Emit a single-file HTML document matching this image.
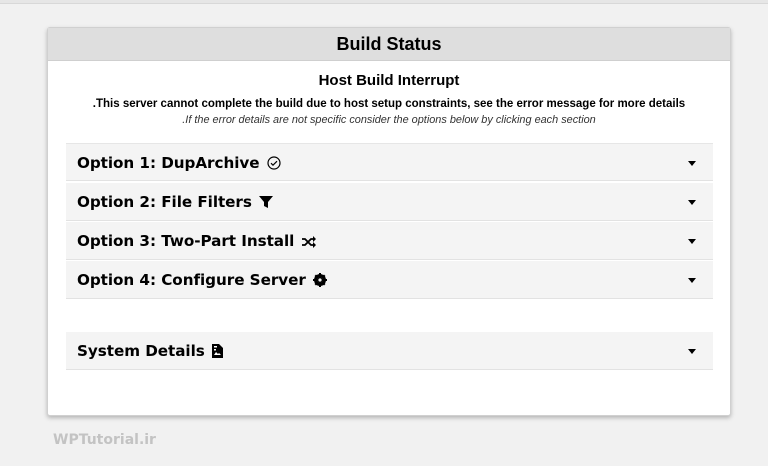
<!DOCTYPE html>
<html><head><style>
body{margin:0;width:768px;height:466px;background:#f1f1f1;position:relative;overflow:hidden;font-family:"Liberation Sans",sans-serif;}
.top{position:absolute;left:0;right:0;top:0;height:3px;background:#e6e6e6;border-bottom:1px solid #d8d8d8}
.panel{position:absolute;left:47px;top:27px;width:682px;height:387px;background:#fff;border:1px solid #d0d0d0;border-radius:3px;box-shadow:0 2px 4px rgba(0,0,0,.25)}
.hd{height:32px;background:#dedede;border-bottom:1px solid #cfcfcf;text-align:center;font-weight:bold;font-size:18px;line-height:33px;color:#000}
.t1{position:absolute;top:44px;left:0;right:0;text-align:center;font-weight:bold;font-size:15px}
.t2{position:absolute;top:70px;left:0;right:0;text-align:center;font-weight:bold;font-size:11.5px}
.t3{position:absolute;top:86px;left:0;right:0;text-align:center;font-style:italic;font-size:10.9px;color:#333}
.row{position:absolute;left:18px;width:647px;height:38px;background:#f4f4f4;border-bottom:1px solid #e2e2e2;font-family:"DejaVu Sans",sans-serif;font-weight:bold;font-size:15.2px;letter-spacing:-0.05px;line-height:38px;color:#000;box-sizing:border-box;padding-left:11px}
.row:after{content:"";position:absolute;right:17px;top:17px;border-left:4px solid transparent;border-right:4px solid transparent;border-top:5px solid #000}
.row svg{vertical-align:-2px;margin-left:2px}
.wm{position:absolute;left:53px;top:432px;font-family:"DejaVu Sans",sans-serif;font-weight:bold;font-size:14px;color:#c3c3c3}
</style></head><body>
<div class="top"></div>
<div class="panel">
<div class="hd">Build Status</div>
<div class="t1">Host Build Interrupt</div>
<div class="t2">.This server cannot complete the build due to host setup constraints, see the error message for more details</div>
<div class="t3">.If the error details are not specific consider the options below by clicking each section</div>
<div class="row" style="top:115px;border-top:1px solid #e6e6e6">Option 1: DupArchive <svg width="14" height="14" viewBox="0 0 14 14"><circle cx="7" cy="7" r="6" fill="none" stroke="#000" stroke-width="1.2"/><path d="M4 7.2l2 2 4-4" fill="none" stroke="#000" stroke-width="1.2"/></svg></div>
<div class="row" style="top:155px">Option 2: File Filters <svg width="14" height="14" viewBox="0 0 14 14"><path d="M0 1h14l-5 6v6l-4-2v-4z" fill="#000"/></svg></div>
<div class="row" style="top:194px">Option 3: Two-Part Install <svg width="14" height="12" viewBox="0 0 14 12"><path d="M0 3h3l6 6h3M0 9h3l6-6h3" fill="none" stroke="#000" stroke-width="1.8"/><path d="M11 0l3 3-3 3zM11 6l3 3-3 3z" fill="#000"/></svg></div>
<div class="row" style="top:233px">Option 4: Configure Server <svg width="14" height="14" viewBox="0 0 14 14"><circle cx="7" cy="7" r="4.5" fill="none" stroke="#000" stroke-width="3"/><path d="M6 0h2v14h-2zM0 6h14v2H0z" fill="#000"/><path d="M1.5 3l1.5-1.5 9.5 9.5-1.5 1.5zM11 1.5l1.5 1.5-9.5 9.5-1.5-1.5z" fill="#000"/><circle cx="7" cy="7" r="1.6" fill="#f4f4f4"/></svg></div>
<div class="row" style="top:304px">System Details <svg width="11" height="14" viewBox="0 0 11 14"><path d="M0 0h7l4 4v10H0z" fill="#000"/><path d="M2 11l2-3 2 2 1-1 2 2z" fill="#fff"/><rect x="2" y="2" width="3" height="1.5" fill="#fff"/><rect x="2" y="5" width="2" height="1.5" fill="#fff"/></svg></div>
</div>
<div class="wm">WPTutorial.ir</div>
</body></html>
